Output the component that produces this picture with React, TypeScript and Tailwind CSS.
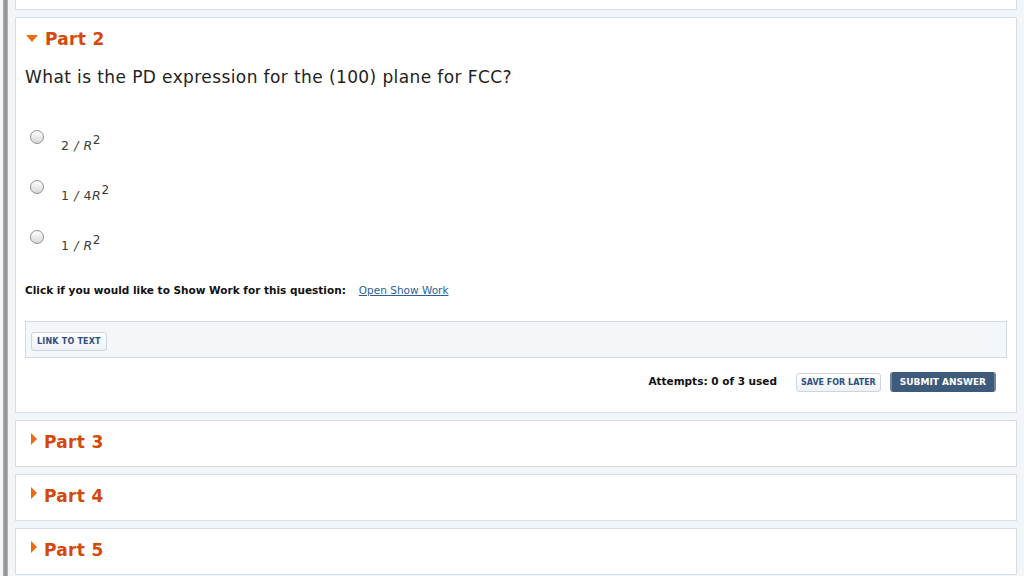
import React from "react";

const font = { fontFamily: '"DejaVu Sans", Verdana, sans-serif' };

function Caret({ open }: { open?: boolean }) {
  if (open) {
    return (
      <svg width="12" height="8" viewBox="0 0 12 8" className="mt-[1px]">
        <polygon points="0,0 12,0 6,7" fill="#f26a10" />
      </svg>
    );
  }
  return (
    <svg width="6" height="12" viewBox="0 0 6 12">
      <polygon points="0,0 6,6 0,12" fill="#f26a10" />
    </svg>
  );
}

function Radio() {
  return (
    <span className="block w-[14px] h-[14px] rounded-full border border-[#8f8f8f] bg-gradient-to-b from-white to-[#d8d8d8]" />
  );
}

function Option({ num, coef }: { num: string; coef?: string }) {
  return (
    <div className="flex items-start h-[50px]">
      <div className="w-[36px] pl-[5px]">
        <Radio />
      </div>
      <div className="pt-[9px] text-[12.5px] leading-[14px] text-[#3a3a3a] tracking-[0.6px] whitespace-pre">
        {num} <i>/</i> {coef}
        <i>R</i>
        <span className="text-[12px] relative -top-[6px]">2</span>
      </div>
    </div>
  );
}

function CollapsedPart({ n }: { n: number }) {
  return (
    <div className="bg-white border border-[#d7dee7] h-[47px] flex items-start pl-[15px] pt-[11px] gap-[7px]">
      <div className="pt-[1px]">
        <Caret />
      </div>
      <span className="text-[17px] font-bold text-[#d4480c] leading-[20px] tracking-[0.3px]">
        Part {n}
      </span>
    </div>
  );
}

export default function App() {
  return (
    <div className="w-[1024px] h-[576px] overflow-hidden bg-[#f3f6f9] flex" style={font}>
      <div className="w-[15px] flex">
        <div className="ml-[3px] w-[5px] bg-gradient-to-r from-[#b0b0b0] via-[#8e8e8e] to-[#b5b5b5]" />
      </div>
      <div className="w-[1002px] flex flex-col gap-[7px]">
        <div className="bg-white border border-t-0 border-[#d7dee7] h-[10px]" />

        <div className="bg-white border border-[#d7dee7] h-[396px] px-[9px] pt-[11px]">
          <div className="flex items-start gap-[7px] pl-[1px]">
            <div className="pt-[5px]">
              <Caret open />
            </div>
            <span className="text-[17px] font-bold text-[#d4480c] leading-[20px] tracking-[0.3px]">Part 2</span>
          </div>
          <p className="mt-[18px] text-[17px] text-[#222] leading-[20px] tracking-[0.4px]">
            What is the PD expression for the (100) plane for FCC?
          </p>
          <div className="mt-[43px]">
            <Option num="2" />
            <Option num="1" coef="4" />
            <Option num="1" />
          </div>
          <div className="mt-[3px] text-[10.5px] leading-[14px] flex">
            <span className="font-bold text-[#111]">Click if you would like to Show Work for this question:</span>
            <a className="ml-[13px] text-[#2b5f97] underline">Open Show Work</a>
          </div>
          <div className="mt-[24px] h-[37px] bg-[#f4f7fa] border border-[#d3dae3] px-[5px] pt-[5px]">
            <span className="inline-block h-[19px] px-[5px] leading-[17px] rounded-[3px] border border-[#cdd5df] bg-gradient-to-b from-white to-[#eef1f5] text-[8px] font-bold text-[#2d4f80] tracking-[0.2px]">
              LINK TO TEXT
            </span>
          </div>
          <div className="mt-[14px] flex items-center justify-end pr-[11px]">
            <span className="text-[10.5px] font-bold text-[#111]">Attempts: 0 of 3 used</span>
            <span className="ml-[19px] inline-block h-[19px] px-[4px] leading-[17px] rounded-[3px] border border-[#cdd5df] bg-gradient-to-b from-white to-[#eef1f5] text-[8px] font-bold text-[#2d4f80]">
              SAVE FOR LATER
            </span>
            <span className="ml-[9px] inline-block h-[20px] px-[8px] leading-[20px] rounded-[3px] bg-[#3e5a7a] border-x-2 border-[#6e86a2] text-[9px] font-bold text-white">
              SUBMIT ANSWER
            </span>
          </div>
        </div>

        <CollapsedPart n={3} />
        <CollapsedPart n={4} />
        <CollapsedPart n={5} />
      </div>
      <div className="flex-1" />
    </div>
  );
}
